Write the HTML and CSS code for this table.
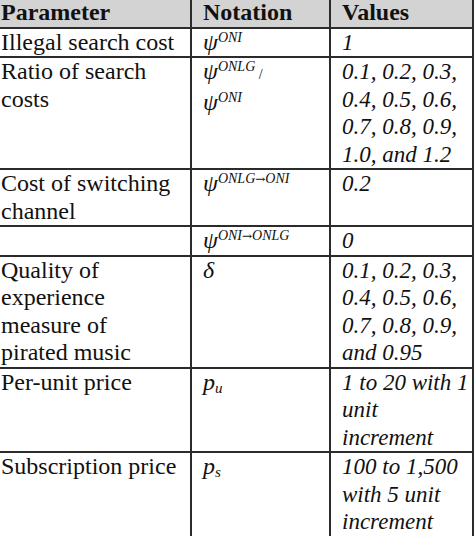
FILE: index.html
```html
<!DOCTYPE html>
<html lang="en">
<head>
<meta charset="utf-8">
<title>Parameters</title>
<link rel="stylesheet" href="styles.css">
</head>
<body>
<div class="params">
  <div class="row head">
    <div class="cell">Parameter</div>
    <div class="cell">Notation</div>
    <div class="cell">Values</div>
  </div>
  <div class="row">
    <div class="cell">Illegal search cost</div>
    <div class="cell note"><span class="sym">ψ</span><span class="sup">ONI</span></div>
    <div class="cell val">1</div>
  </div>
  <div class="row">
    <div class="cell">Ratio of search<br>costs</div>
    <div class="cell note"><span class="sym">ψ</span><span class="sup">ONLG</span><span class="slash"> /</span><br><span class="sym">ψ</span><span class="sup">ONI</span></div>
    <div class="cell val">0.1, 0.2, 0.3,<br>0.4, 0.5, 0.6,<br>0.7, 0.8, 0.9,<br>1.0, and 1.2</div>
  </div>
  <div class="row">
    <div class="cell">Cost of switching<br>channel</div>
    <div class="cell note"><span class="sym">ψ</span><span class="sup">ONLG<span class="arr">→</span>ONI</span></div>
    <div class="cell val">0.2</div>
  </div>
  <div class="row">
    <div class="cell"></div>
    <div class="cell note"><span class="sym">ψ</span><span class="sup">ONI<span class="arr">→</span>ONLG</span></div>
    <div class="cell val">0</div>
  </div>
  <div class="row">
    <div class="cell">Quality of<br>experience<br>measure of<br>pirated music</div>
    <div class="cell note"><span class="sym">δ</span></div>
    <div class="cell val">0.1, 0.2, 0.3,<br>0.4, 0.5, 0.6,<br>0.7, 0.8, 0.9,<br>and 0.95</div>
  </div>
  <div class="row">
    <div class="cell">Per-unit price</div>
    <div class="cell note"><span class="sym">p</span><span class="sub">u</span></div>
    <div class="cell val">1 to 20 with 1<br>unit<br>increment</div>
  </div>
  <div class="row last">
    <div class="cell">Subscription price</div>
    <div class="cell note"><span class="sym">p</span><span class="sub">s</span></div>
    <div class="cell val">100 to 1,500<br>with 5 unit<br>increment</div>
  </div>
</div>
</body>
</html>
```

FILE: styles.css
```css
* {
  font-family: "Liberation Serif", "Times New Roman", serif;
}

html, body {
  margin: 0;
  padding: 0;
  background: #ffffff;
}

body {
  overflow: hidden;
}

.params {
  width: 474px;
  margin-top: -1px;
  color: #111111;
}

.row {
  display: grid;
  grid-template-columns: 192px 139px 143px;
  border-bottom: 2px solid #2b2b2b;
}

.row.last {
  border-bottom: none;
}

.head {
  background: #d3d3d3;
}

.cell {
  box-sizing: border-box;
  padding: 0 4px 0 11px;
  border-right: 2px solid #2b2b2b;
  white-space: nowrap;
  overflow: hidden;
  font-family: "Liberation Serif", "Times New Roman", serif;
  font-size: 24px;
  line-height: 27.5px;
}

.cell:first-child {
  padding-left: 1px;
}

.head .cell {
  font-weight: bold;
}

.val {
  font-style: italic;
  font-size: 23px;
}

.sym {
  font-style: italic;
}

.sup {
  font-style: italic;
  font-size: 14px;
  line-height: 0;
  vertical-align: 8px;
}

.arr {
  font-family: "DejaVu Serif", serif;
  font-style: normal;
  font-size: 12px;
}

.sub {
  font-style: italic;
  font-size: 15px;
  line-height: 0;
  vertical-align: -3px;
}

.slash {
  font-size: 14px;
}
```
